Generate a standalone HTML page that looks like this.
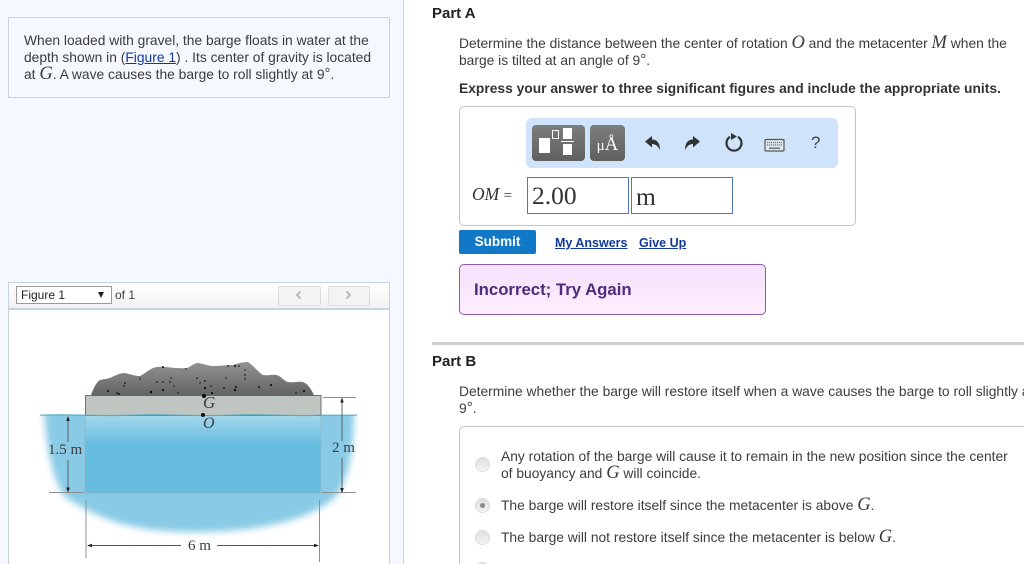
<!DOCTYPE html>
<html><head><meta charset="utf-8">
<style>
html,body{margin:0;padding:0;background:#fff;width:1024px;height:564px;overflow:hidden}
#p{width:1024px;height:564px;position:relative;overflow:hidden;font-family:"Liberation Sans",sans-serif;font-size:13.82px;color:#3c3c3c}
.a{position:absolute;white-space:nowrap}
.t{line-height:17px}
i.m{font-family:"Liberation Serif",serif;font-size:18.500px;font-style:italic;line-height:0}
.d{font-size:15px;line-height:0;position:relative;top:-1px}
a{color:#12399a;text-decoration:underline}
.radio{position:absolute;width:13px;height:13px;border-radius:50%;background:linear-gradient(#dfdfdf,#f4f4f4);border:1px solid #dcdcdc;box-sizing:content-box}
</style></head><body><div id="p">
<div class="a" style="left:0;top:0;width:403px;height:564px;background:#f5f9ff;border-right:1px solid #c3d2de"></div>
<div class="a" style="left:8px;top:17px;width:380px;height:79px;border:1px solid #c6d4e0"></div>
<div class="a t" style="left:24px;top:32px">When loaded with gravel, the barge floats in water at the<br>depth shown in (<a href="#">Figure 1</a>) . Its center of gravity is located<br>at <i class="m">G</i>. A wave causes the barge to roll slightly at 9<span class="d">°</span>.</div>

<div class="a" style="left:8px;top:282px;width:380px;height:25px;border:1px solid #c6d4e0;background:linear-gradient(#fff,#f2f2f2)"></div>
<div class="a" style="left:16px;top:286px;width:94px;height:16px;border:1px solid #9a9a9a;background:#fff;font-size:12px;line-height:16px;color:#222"><span style="margin-left:4px">Figure 1</span><span style="position:absolute;left:81px;top:5px;border-left:3.5px solid transparent;border-right:3.5px solid transparent;border-top:6px solid #222"></span></div>
<div class="a" style="left:115px;top:287px;font-size:12px;line-height:16px">of 1</div>
<div class="a" style="left:278px;top:286px;width:41px;height:18px;border:1px solid #ddd;border-radius:2px;background:#f3f3f3"></div>
<div class="a" style="left:328px;top:286px;width:40px;height:18px;border:1px solid #ddd;border-radius:2px;background:#f3f3f3"></div>
<div class="a" style="left:8px;top:309px;width:380px;height:260px;border:1px solid #c6d4e0;background:#fff"></div>

<svg class="a" style="left:0;top:0" width="403" height="564" viewBox="0 0 403 564">
<defs>
<linearGradient id="w" x1="0" y1="0" x2="0" y2="1"><stop offset="0" stop-color="#a5d7ec"/><stop offset=".38" stop-color="#66bde0"/><stop offset="1" stop-color="#66bde0"/></linearGradient>
<linearGradient id="gr" x1="0" y1="0" x2="0" y2="1"><stop offset="0" stop-color="#929293"/><stop offset="1" stop-color="#636365"/></linearGradient>
<filter id="b" x="-10%" y="-10%" width="120%" height="120%"><feGaussianBlur stdDeviation="3.500"/></filter>
<filter id="s" x="-5%" y="-5%" width="110%" height="110%"><feGaussianBlur stdDeviation=".35"/></filter>
<clipPath id="c"><rect x="30" y="415" width="340" height="130"/></clipPath>
</defs>
<path d="M300.500 291.500L297 295L300.500 298.500M346.500 291.500L350 295L346.500 298.500" fill="none" stroke="#bbb" stroke-width="2"/>
<g clip-path="url(#c)"><path d="M44 405L354 405C354 450 350 472 338 494C318 516 270 532 195 532C140 532 105 524 64 496C52 476 46 450 44 405Z" fill="#89cbe6" filter="url(#b)"/></g>
<rect x="85" y="415" width="236" height="78" rx="1.500" fill="url(#w)" stroke="#97b7c4" stroke-width=".8"/>
<rect x="85.500" y="395.500" width="235.500" height="20" fill="#bfc6c2" stroke="#555" stroke-width=".8"/>
<path d="M40 415.200Q60 414.500 85 415.200T130 415.200T180 415.200T230 415.200T280 415.200T320 415.200L357 415.200" fill="none" stroke="#55adc5" stroke-width="1.200"/>
<path d="M91 395.500C93 389 97 381 100 380C104 379 107 379 110 378C114 376 118 374 123 373C128 373 134 376 140 376C146 373 150 368 157 367C165 366 175 369 187 368C190 367 193 364 197 363C202 363 208 366 213 366C220 366 226 365 233 365C238 363 244 362 248 362C253 365 258 372 263 375C268 376 273 374 277 375C282 377 284 381 288 382C293 383 299 381 303 382C308 384 312 390 314 395.500Z" fill="url(#gr)" filter="url(#s)"/>
<g fill="#111" filter="url(#s)">
<circle cx="108" cy="391" r="1"/><circle cx="117" cy="393" r=".9"/><circle cx="125" cy="383" r=".9"/><circle cx="124" cy="386" r=".8"/><circle cx="140" cy="379" r=".7"/><circle cx="151" cy="392" r="1.300"/><circle cx="163" cy="390" r="1.100"/><circle cx="163" cy="367" r="1"/><circle cx="157" cy="382" r=".8"/><circle cx="163" cy="382" r=".8"/><circle cx="170" cy="382" r=".8"/><circle cx="174" cy="386" r=".7"/><circle cx="171" cy="378" r=".7"/><circle cx="186" cy="369" r=".7"/><circle cx="197" cy="378" r=".8"/><circle cx="205" cy="381" r=".9"/><circle cx="205" cy="388" r="1.100"/><circle cx="211" cy="386" r=".8"/><circle cx="200" cy="383" r=".7"/><circle cx="224" cy="388" r=".9"/><circle cx="226" cy="378" r=".7"/><circle cx="235" cy="390" r="1.200"/><circle cx="236" cy="387" r="1"/><circle cx="245" cy="375" r=".8"/><circle cx="245" cy="379" r=".8"/><circle cx="245" cy="370" r=".7"/><circle cx="228" cy="366" r=".9"/><circle cx="235" cy="366" r="1"/><circle cx="239" cy="366" r=".8"/><circle cx="259" cy="387" r="1"/><circle cx="271" cy="385" r="1.100"/><circle cx="304" cy="391" r="1.100"/><circle cx="296" cy="393" r=".7"/><circle cx="212" cy="393" r="1.100"/><circle cx="178" cy="393" r=".7"/><circle cx="119" cy="394" r="1"/>
<circle cx="204" cy="396" r="2"/><circle cx="203" cy="415" r="2"/>
</g>
<g fill="none" stroke="#8f8f8f" stroke-width="1">
<path d="M49 492.500H84M322 492.500H356M323 397.500H356M86 500V558M319.500 500V562"/>
</g>
<g fill="none" stroke="#555" stroke-width=".9">
<path d="M68 418V442M68 460V491M342 399V441M342 458V492M88 545.500H181M217 545.500H317"/>
</g>
<g fill="#222">
<path d="M68 416l-1.800 5h3.600zM68 492.500l-1.800-5h3.600zM342 397.500l-1.800 5h3.600zM342 493l-1.800-5h3.600zM87 545.500l5-1.800v3.600zM319 545.500l-5-1.800v3.600z"/>
</g>
<g font-family="Liberation Serif,serif" fill="#3c3c3c" font-size="15">
<text x="48" y="454">1.5 m</text>
<text x="332" y="452">2 m</text>
<text x="188" y="550">6 m</text>
<text x="203" y="408" font-style="italic" font-size="17">G</text>
<text x="203" y="428" font-style="italic" font-size="16">O</text>
</g>
</svg>

<div class="a" style="left:432px;top:6px;font-size:15px;font-weight:bold;color:#222;line-height:16px">Part A</div>
<div class="a t" style="left:459px;top:35px">Determine the distance between the center of rotation <i class="m">O</i> and the metacenter <i class="m">M</i> when the<br>barge is tilted at an angle of 9<span class="d">°</span>.</div>
<div class="a t" style="left:459px;top:80px;font-weight:bold;color:#333">Express your answer to three significant figures and include the appropriate units.</div>

<div class="a" style="left:459px;top:106px;width:395px;height:118px;border:1px solid #c4c4c4;border-radius:5px"></div>
<div class="a" style="left:526px;top:118px;width:312px;height:50px;background:#cfe4fb;border-radius:6px"></div>
<div class="a" style="left:532px;top:125px;width:53px;height:36px;border-radius:4px;background:linear-gradient(#7d7d7d,#5f5f5f)">
<span class="a" style="left:7px;top:13px;width:11px;height:15px;background:#fff"></span>
<span class="a" style="left:20px;top:5px;width:5px;height:7px;border:1px solid #fff"></span>
<span class="a" style="left:31px;top:3px;width:9px;height:11px;background:#fff"></span>
<span class="a" style="left:29px;top:16px;width:13px;height:1px;background:#fff"></span>
<span class="a" style="left:31px;top:19px;width:9px;height:11px;background:#fff"></span>
</div>
<div class="a" style="left:590px;top:125px;width:35px;height:36px;border-radius:4px;background:linear-gradient(#7d7d7d,#5f5f5f);color:#fff;font-family:'Liberation Serif',serif;font-size:19px;line-height:40px;text-align:center"><span style="font-size:15px">μ</span>Å</div>
<svg class="a" style="left:640px;top:130px" width="200" height="30" viewBox="0 0 200 30">
<path d="M5 11.500L12 6V9.500C17 9.500 20 13 20 20C18 16 15.500 14 12 14V17.500Z" fill="#333"/>
<path d="M60 11.500L53 6V9.500C48 9.500 45 13 45 20C47 16 49.500 14 53 14V17.500Z" fill="#333"/>
<path d="M90 6.800A7.500 7.500 0 1 0 98 6.800" fill="none" stroke="#333" stroke-width="2.200"/><path d="M91 3L97 6.500L91 10Z" fill="#333"/>
<rect x="125" y="9.500" width="19" height="11.500" rx="1" fill="#dfe8f0" stroke="#555" stroke-width="1.200"/>
<path d="M127 12.500H142M127 15H142" stroke="#777" stroke-width="1.300" stroke-dasharray="1.200 .8"/><path d="M129 18.200H140" stroke="#555" stroke-width="1.200"/>
<text x="171" y="18" font-family="Liberation Sans,sans-serif" font-size="17" fill="#444">?</text>
</svg>
<div class="a" style="left:472px;top:185px;font-family:'Liberation Serif',serif;font-size:17.500px;line-height:18px;color:#333"><i>OM</i> <span style="font-size:15px">=</span></div>
<div class="a" style="left:527px;top:177px;width:100px;height:35px;border:1px solid #4d76c9;background:#fff;font-family:'Liberation Serif',serif;font-size:25.500px;line-height:35px;color:#333"><span style="margin-left:4px">2.00</span></div>
<div class="a" style="left:631px;top:177px;width:100px;height:35px;border:1px solid #4d76c9;background:#fff;font-family:'Liberation Serif',serif;font-size:25.500px;line-height:37px;color:#333"><span style="margin-left:4px">m</span></div>

<div class="a" style="left:459px;top:230px;width:77px;height:24px;background:#1178c8;border-radius:2px;color:#fff;font-size:13.500px;font-weight:bold;text-align:center;line-height:24px">Submit</div>
<div class="a" style="left:555px;top:235px;font-size:12.500px;font-weight:bold;line-height:16px"><a href="#">My Answers</a></div>
<div class="a" style="left:639px;top:235px;font-size:12.500px;font-weight:bold;line-height:16px"><a href="#">Give Up</a></div>

<div class="a" style="left:459px;top:264px;width:305px;height:49px;border:1px solid #8a5ba8;border-radius:5px;background:linear-gradient(#f5e1fb,#fdeeff)"></div>
<div class="a" style="left:474px;top:280px;font-size:16.750px;font-weight:bold;color:#4f2b7c;line-height:20px">Incorrect; Try Again</div>

<div class="a" style="left:432px;top:342px;width:592px;height:3px;background:#d0d0d0"></div>
<div class="a" style="left:432px;top:354px;font-size:15px;font-weight:bold;color:#222;line-height:16px">Part B</div>
<div class="a t" style="left:459px;top:383px">Determine whether the barge will restore itself when a wave causes the barge to roll slightly at<br>9<span class="d">°</span>.</div>

<div class="a" style="left:459px;top:426px;width:580px;height:160px;border:1px solid #c4c4c4;border-radius:5px"></div>
<div class="radio" style="left:475px;top:457px"></div>
<div class="a t" style="left:501px;top:448px">Any rotation of the barge will cause it to remain in the new position since the center<br>of buoyancy and <i class="m">G</i> will coincide.</div>
<div class="radio" style="left:475px;top:498px"></div><div class="a" style="left:480px;top:503px;width:5px;height:5px;border-radius:50%;background:#8a8a8a"></div>
<div class="a t" style="left:501px;top:497px">The barge will restore itself since the metacenter is above <i class="m">G</i>.</div>
<div class="radio" style="left:475px;top:530px"></div>
<div class="a t" style="left:501px;top:529px">The barge will not restore itself since the metacenter is below <i class="m">G</i>.</div>
<div class="radio" style="left:475px;top:562px"></div>
</div></body></html>
